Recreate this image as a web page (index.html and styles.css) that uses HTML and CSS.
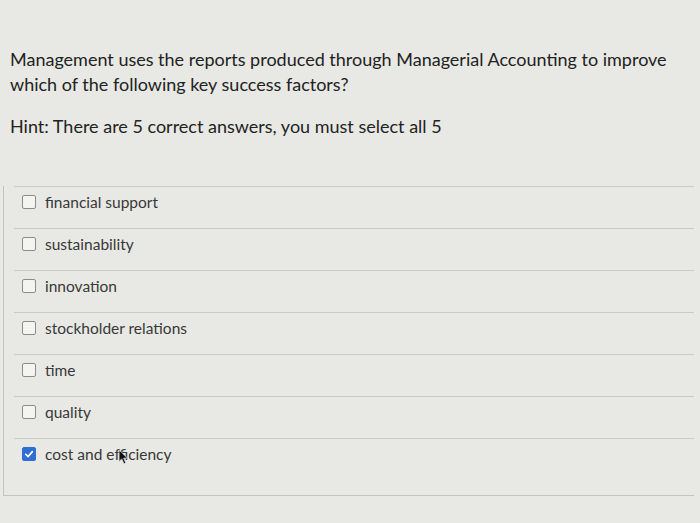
FILE: index.html
```html
<!DOCTYPE html>
<html>
<head>
<meta charset="utf-8">
<link rel="stylesheet" href="styles.css">
</head>
<body>
<div class="page">
  <div class="question">
    <p class="q-text">Management uses the reports produced through Managerial Accounting to improve which of the following key success factors?</p>
    <p class="hint">Hint: There are 5 correct answers, you must select all 5</p>
  </div>
  <div class="answers">
    <div class="row"><span class="box"></span><span class="label">financial support</span></div>
    <div class="row"><span class="box"></span><span class="label">sustainability</span></div>
    <div class="row"><span class="box"></span><span class="label">innovation</span></div>
    <div class="row"><span class="box"></span><span class="label">stockholder relations</span></div>
    <div class="row"><span class="box"></span><span class="label">time</span></div>
    <div class="row"><span class="box"></span><span class="label">quality</span></div>
    <div class="row last">
      <span class="box checked"><svg viewBox="0 0 14 14" width="14" height="14"><path d="M3.2 7.3 L6 10 L10.9 4.2" fill="none" stroke="#ffffff" stroke-width="2" stroke-linecap="round" stroke-linejoin="round"/></svg></span>
      <span class="label cursor-host">cost and efficiency<svg class="cursor" viewBox="0 0 12 18" width="11" height="16"><path d="M1 1 L1 14 L4 11 L6.5 16.5 L8.5 15.6 L6.2 10.3 L10.5 10.3 Z" fill="#111" stroke="#ddd" stroke-width="0.8"/></svg></span>
    </div>
  </div>
</div>
</body>
</html>
```
FILE: styles.css
```css
html, body {
  margin: 0;
  padding: 0;
  background: #e8e9e5;
}
.page {
  width: 700px;
  height: 523px;
  padding-top: 47px;
  box-sizing: border-box;
  font-family: Lato, "Open Sans", sans-serif;
  overflow: hidden;
}
.question {
  padding-left: 10px;
  color: #222222;
  font-size: 18px;
  line-height: 25px;
}
.q-text {
  margin: 0;
  width: 670px;
}
.hint {
  margin: 17px 0 0;
}
.answers {
  margin: 47px 6px 0 3px;
  border-left: 1px solid #c4c5c1;
  border-bottom: 1px solid #c4c5c1;
  height: 309px;
}
.row {
  margin-left: 10px;
  border-top: 1px solid #cacbc7;
  padding: 6px 0 18px;
  height: 17px;
  display: flex;
  align-items: center;
  gap: 9px;
  color: #383838;
  font-size: 15.5px;
}
.box {
  width: 12px;
  height: 12px;
  margin-left: 8px;
  border: 1px solid #8c8d8a;
  border-radius: 2px;
  background: #f4f4f2;
  flex: none;
  display: flex;
  align-items: center;
  justify-content: center;
}
.box.checked {
  background: #2f6ed3;
  border-color: #2f6ed3;
}
.cursor-host {
  position: relative;
}
.cursor {
  position: absolute;
  left: 73px;
  top: 4px;
}
```
